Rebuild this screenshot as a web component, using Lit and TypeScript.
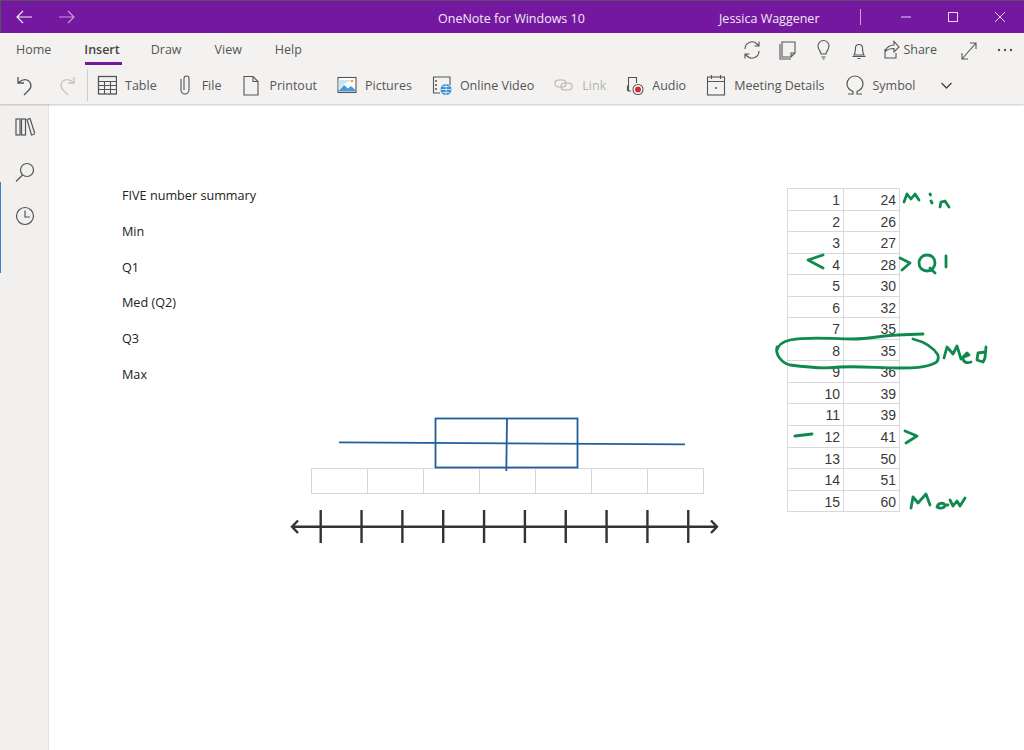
import { LitElement, html, css, svg } from "lit";
import { customElement } from "lit/decorators.js";

const I = (w: number, body: unknown) => html`<svg class="ic" width=${w} height="22" viewBox="0 0 ${w} 22" fill="none" stroke="currentColor" stroke-width="1.1">${body}</svg>`;

const tools = [
  { t: "Table", w: 20, i: svg`<rect x="1.500" y="2.500" width="18" height="17.500" stroke="#555" stroke-width="1.300"/><path d="M1.500 7.500h18M1.500 11.500h18M1.500 15.500h18M7.500 7.500V20M13.500 7.500V20"/>` },
  { t: "File", w: 17, i: svg`<path d="M4 5v11a4 4 0 0 0 8 0V4.500a2.500 2.500 0 0 0-5 0V16"/>` },
  { t: "Printout", w: 20, i: svg`<path d="M3 2.500h9l5 5v13.500H3zM12 2.500v5h5"/>` },
  { t: "Pictures", w: 20, i: svg`<rect x="1" y="3.500" width="18" height="15" fill="#fff" stroke="#555"/><path d="M1.500 17l5.500-6 4 3.500 3-2.500 4.500 4v1.500H1.500z" fill="#4a9bd4" stroke="none"/><path d="M1.500 6h13l-7.500 4-5.500 5z" fill="#cfe4f3" stroke="none"/><circle cx="15" cy="7" r="1.300" fill="#e8a33b" stroke="none"/>` },
  { t: "Online Video", w: 20, i: svg`<path d="M4 3h14v8M8 19H1.500V3H4"/><path d="M3 7h2M3 11h2M3 15h2" stroke-width="1.500"/><circle cx="14" cy="15.500" r="5.500" fill="#3f8fd2" stroke="none"/><path d="M8.500 15.500h11M14 10v11M10.500 12.500h7M10.500 18.500h7" stroke="#fff" stroke-width=".7"/>` },
  { t: "Link", w: 20, dis: true, i: svg`<rect x="1" y="6" width="11" height="7" rx="3.500"/><rect x="7" y="9" width="11" height="7" rx="3.500"/>` },
  { t: "Audio", w: 18, i: svg`<path d="M5 17H2.500V3.500h8V9M2 12h-.5v5"/><circle cx="12" cy="15.500" r="5" fill="#fff" stroke="#555"/><circle cx="12" cy="15.500" r="3" fill="#d6283c" stroke="none"/>` },
  { t: "Meeting Details", w: 20, i: svg`<rect x="1.500" y="3" width="17" height="18"/><path d="M1.500 7.500h17M5.500 1v4M14.500 1v4"/><circle cx="10" cy="14" r=".9" fill="#444" stroke="none"/>` },
  { t: "Symbol", w: 20, i: svg`<path d="M3 20h5v-2.500C4.500 16 2 13.500 2 10a8 8 0 0 1 16 0c0 3.500-2.500 6-6 7.500V20h5" stroke-width="1.200"/>` },
];

const tabs = ["Home", "Insert", "Draw", "View", "Help"];
const rows = [24, 26, 27, 28, 30, 32, 35, 35, 36, 39, 39, 41, 50, 51, 60];
const notes = ["FIVE number summary", "Min", "Q1", "Med (Q2)", "Q3", "Max"];
const ink = [
  "M904 202L907 194L911 199L915 194L919 200", "M930 194L930.500 195", "M931 201L932 203", "M940 207L941 202L945 201L949 207",
  "M823 255L808 260L823 268", "M900 258L910 263L902 270", "M927 255C921 255 919 260 919 263C919 268 923 271 927 271C932 271 935 267 935 263C935 258 932 255 927 255ZM930 268L935 273", "M946 256L946 267",
  "M777 350C778 345 782 342 790 340C810 336 830 339 853 339C870 339 885 335 897 335L923 334", "M913 339C925 342 933 347 938 355C939 360 937 362 935 363C925 368 913 368 900 368C880 368 860 366 840 367C825 369 805 367 790 365C782 363 775 355 777 347",
  "M944 358L947 347L953 354L957 346L961 359", "M964 357L969 355L967 353L963 357C962 361 966 364 971 362", "M985 352L978 353L977 360L983 362L985 358L986 347",
  "M795 436L812 434", "M905 431L917 436L906 443",
  "M911 508L913 497L918 503L926 494L930 505", "M937 507C938 503 943 502 945 505C945 508 940 509 937 507M945 505L948 505", "M950 500L953 506L957 501L960 506L965 498",
];
const ticks = Array.from({ length: 10 }, (_, i) => 320.7 + i * 40.84);

@customElement("app-root")
export class AppRoot extends LitElement {
  static styles = css`
    :host { display: block; width: 1024px; height: 750px; overflow: hidden; font-family: "Open Sans", "Liberation Sans", sans-serif; background: #fff; }
    .app { display: flex; flex-direction: column; height: 750px; }
    .title { position: relative; height: 33px; background: #74199f; color: #f3e8f7; display: flex; align-items: center; padding-left: 15px; border-left: 1px solid #555; box-sizing: border-box; font-size: 12.500px; flex: none; border-top: 1px solid #5f4a6c; }
    .title .fwd { margin-left: 27px; color: #c79ddb; }
    .title .name { position: absolute; left: 437px; top: 9px; }
    .title .user { position: absolute; left: 718px; top: 9px; }
    .winctl { margin-left: auto; display: flex; align-items: center; color: #e8d5f0; }
    .winctl svg { display: block; }
    .winctl .div { width: 1px; height: 16px; background: #c9a5dc; margin-right: 40px; }
    .winctl .btn { margin-right: 37px; }
    .winctl .btn:last-child { margin-right: 19px; }
    .tabs { height: 35px; flex: none; background: #f3f2f1; display: flex; align-items: center; padding: 0 0 2px 16px; gap: 33px; font-size: 12.500px; color: #555; box-sizing: border-box; }
    .tab { position: relative; }
    .tab.on { font-weight: 600; color: #444; margin-right: -2px; }
    .tab.on::after { content: ""; position: absolute; left: 1px; right: -2px; top: 21px; height: 2.500px; background: #74199f; }
    .right { margin-left: auto; display: flex; align-items: center; color: #555; padding-right: 11px; gap: 20px; }
    .sync { display: block; margin-right: -2px; }
    .share { display: flex; align-items: center; gap: 3px; margin-left: -3px; margin-right: 4px; }
    .bar { height: 36px; flex: none; background: #f3f2f1; display: flex; align-items: center; padding: 0 0 2px 16px; font-size: 12.500px; color: #555; gap: 20px; box-sizing: border-box; box-shadow: 0 1px 2px rgba(0,0,0,.22); position: relative; z-index: 1; }
    .undo { display: flex; gap: 20px; margin-right: -12px; }
    .redo { display: block; color: #c4c2c1; }
    .sep { width: 1px; height: 32px; background: #cfcdcb; margin: 0 -11px 0 3px; }
    .tool { display: flex; align-items: center; gap: 8px; color: #555; }
    .tool.dis { color: #b5b3b2; }
    .ic { display: block; flex: none; }
    .chev { margin-left: 5px; }
    .main { flex: 1; display: flex; min-height: 0; }
    .side { position: relative; width: 49px; flex: none; background: #f1f0ef; border-right: 1px solid #e4e3e2; box-sizing: border-box; display: flex; flex-direction: column; align-items: center; padding: 13px 0 0 1px; gap: 24.500px; color: #555; }
    .side::before { content: ""; position: absolute; left: 0; top: 78px; width: 1px; height: 91px; background: #3f7fc6; }
    .canvas { position: relative; flex: 1; background: #fff; }
    .notes { padding: 83px 0 0 73px; display: flex; flex-direction: column; gap: 18px; font-size: 12.650px; line-height: 17.800px; color: #222; }
    .ink { position: absolute; left: 0; top: 0; }
    .grid { position: absolute; left: 738px; top: 84px; display: grid; grid-template-columns: 56px 56px; grid-auto-rows: 21.550px; font-family: "Liberation Sans", Arial, sans-serif; font-size: 14px; color: #3a3a3a; border-top: 1px solid #d8d8d8; border-left: 1px solid #d8d8d8; }
    .grid div { border-right: 1px solid #d8d8d8; border-bottom: 1px solid #d8d8d8; text-align: right; padding-right: 3px; line-height: 23px; box-sizing: border-box; height: 21.550px; }
  `;

  render() {
    return html`<div class="app">
      <header class="title">
        <svg width="16" height="14" viewBox="0 0 16 14" fill="none" stroke="#f6ecfa" stroke-width="1.200"><path d="M16 7H1M7 1L1 7l6 6"/></svg>
        <svg class="fwd" width="16" height="14" viewBox="0 0 16 14" fill="none" stroke="currentColor" stroke-width="1.200"><path d="M0 7h15M9 1l6 6-6 6"/></svg>
        <span class="name">OneNote for Windows 10</span>
        <span class="user">Jessica Waggener</span>
        <div class="winctl">
          <span class="div"></span>
          <svg class="btn" width="10" height="10" viewBox="0 0 10 10" stroke="currentColor"><path d="M0 5h10"/></svg>
          <svg class="btn" width="10" height="10" viewBox="0 0 10 10" fill="none" stroke="currentColor"><rect x=".5" y=".5" width="9" height="9"/></svg>
          <svg class="btn" width="10" height="10" viewBox="0 0 10 10" stroke="currentColor"><path d="M0 0l10 10M10 0L0 10"/></svg>
        </div>
      </header>
      <nav class="tabs">
        ${tabs.map((t) => html`<span class="tab ${t === "Insert" ? "on" : ""}">${t}</span>`)}
        <div class="right">
          <span class="sync">${I(18, svg`<path d="M2 10a7 7 0 0 1 12-5l2 2M16 2.500V7h-4.500M16 12a7 7 0 0 1-12 5l-2-2M2 19.500V15h4.500"/>`)}</span>
          ${I(17, svg`<path d="M3 3h13v11l-4 4H3zM16 14h-4v4M1 5v15h11"/>`)}
          ${I(15, svg`<path d="M5 15c0-3-3-4-3-8a5.500 5.500 0 0 1 11 0c0 4-3 5-3 8zM5.500 18h4M6.500 20h2"/>`)}
          ${I(16, svg`<path d="M3 16c1.500-2 1.500-4 1.500-7a3.500 3.500 0 0 1 7 0c0 3 0 5 1.500 7zM1.500 17.500h13M6.500 19.500h3"/>`)}
          <span class="share">
            ${I(16, svg`<path d="M1 10v9h11v-5M1 12c2-4 5-6 9-6V2.500L15 8l-5 5V9.500c-4 0-7 1-9 3.500z"/>`)}
            <span>Share</span>
          </span>
          ${I(16, svg`<path d="M1 20L15 4M9 4h6v6M1 14v6h6"/>`)}
          <svg class="ic" width="16" height="4" viewBox="0 0 16 4" fill="currentColor"><circle cx="2" cy="2" r="1.200"/><circle cx="8" cy="2" r="1.200"/><circle cx="14" cy="2" r="1.200"/></svg>
        </div>
      </nav>
      <div class="bar">
        <div class="undo">
          ${I(20, svg`<path d="M2 3v6h6M2 9c3-3 6-4 9-3a6 6 0 0 1 2 10l-5 5" stroke-width="1.300"/>`)}
          <span class="redo">${I(20, svg`<path d="M18 3v6h-6M18 9c-3-3-6-4-9-3a6 6 0 0 0-2 10l5 5" stroke-width="1.300"/>`)}</span>
        </div>
        <span class="sep"></span>
        ${tools.map((x) => html`<div class="tool ${x.dis ? "dis" : ""}">${I(x.w, x.i)}<span>${x.t}</span></div>`)}
        <svg class="chev" width="11" height="7" viewBox="0 0 11 7" fill="none" stroke="#444" stroke-width="1.300"><path d="M.5 1l5 5 5-5"/></svg>
      </div>
      <div class="main">
        <aside class="side">
          <svg width="20" height="20" viewBox="0 0 20 20" fill="none" stroke="currentColor" stroke-width="1.200"><rect x="1" y="2" width="4" height="16"/><rect x="6.500" y="2" width="4" height="16"/><path d="M12 2.500l3-1 5 15.500-3.500 1z"/></svg>
          <svg width="20" height="20" viewBox="0 0 20 20" fill="none" stroke="currentColor" stroke-width="1.200"><circle cx="12" cy="8" r="6.500"/><path d="M7.500 13L1 19.500"/></svg>
          <svg width="20" height="20" viewBox="0 0 20 20" fill="none" stroke="currentColor" stroke-width="1.200"><circle cx="10" cy="10" r="8.500"/><path d="M10 4.500V11h5"/></svg>
        </aside>
        <main class="canvas">
          <div class="notes">${notes.map((n) => html`<div>${n}</div>`)}</div>
          <div class="grid">${rows.map((v, i) => html`<div>${i + 1}</div><div>${v}</div>`)}</div>
          <svg class="ink" width="975" height="646" viewBox="49 104 975 646" fill="none">
            <g stroke="#d6d6d6">
              <rect x="311.500" y="468.500" width="392" height="25"/>
              ${[1, 2, 3, 4, 5, 6].map((i) => svg`<path d="M${311.500 + i * 56} 468.500v25"/>`)}
            </g>
            <g stroke="#1f5f9e" stroke-width="1.800">
              <rect x="435.500" y="418.500" width="142" height="49"/>
              <path d="M507 418.500L506.300 471M339 442.300L685 444.300"/>
            </g>
            <g stroke="#333" stroke-width="2.400">
              <path d="M292 526.700H717M298 520.500L292 526.700L298 533M711 520.500L717 526.700L711 533"/>
              ${ticks.map((x) => svg`<path d="M${x} 510V543"/>`)}
            </g>
            <g stroke="#0f8a4e" stroke-width="2.800" stroke-linecap="round" stroke-linejoin="round">
              ${ink.map((d) => svg`<path d=${d}/>`)}
            </g>
          </svg>
        </main>
      </div>
    </div>`;
  }
}
